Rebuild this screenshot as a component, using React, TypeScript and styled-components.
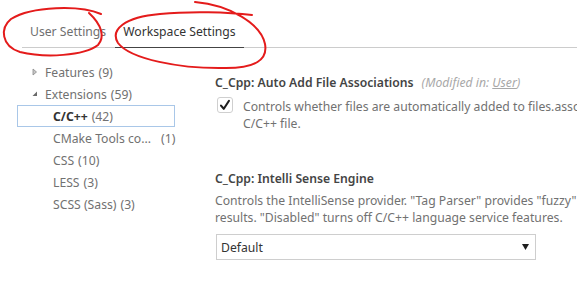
import styled, { createGlobalStyle } from "styled-components";

const GlobalStyle = createGlobalStyle`
  html, body {
    margin: 0;
    padding: 0;
    background: #ffffff;
  }
  body {
    font-family: "Noto Sans", "Open Sans", "DejaVu Sans", sans-serif;
    font-size: 12.2px;
  }
`;

const treeItems = [
  { label: "Features", count: "(9)", depth: 0, twisty: "closed" },
  { label: "Extensions", count: "(59)", depth: 0, twisty: "open" },
  { label: "C/C++", count: "(42)", depth: 1, selected: true },
  { label: "CMake Tools co...", count: " (1)", depth: 1, gap: true },
  { label: "CSS", count: "(10)", depth: 1 },
  { label: "LESS", count: "(3)", depth: 1 },
  { label: "SCSS (Sass)", count: "(3)", depth: 1 },
];

function Twisty({ open }: { open: boolean }) {
  if (open) {
    return (
      <TwistyBox>
        <svg width="6" height="6" viewBox="0 0 6 6">
          <polygon points="5,0.5 5,5 0.5,5" fill="#6a6a6a" />
        </svg>
      </TwistyBox>
    );
  }
  return (
    <TwistyBox>
      <svg width="6" height="8" viewBox="0 0 6 8">
        <polygon points="1,1 4.5,4 1,7" fill="#c8c8c8" stroke="#8a8a8a" strokeWidth="0.8" />
      </svg>
    </TwistyBox>
  );
}

function App() {
  return (
    <>
      <GlobalStyle />
      <Page>
        <TabBar>
          <Tab>User Settings</Tab>
          <Tab active>Workspace Settings</Tab>
        </TabBar>
        <Body>
          <Tree>
            {treeItems.map((item, idx) => (
              <TreeRow key={idx} depth={item.depth} selected={item.selected}>
                {item.twisty && <Twisty open={item.twisty === "open"} />}
                <TreeLabel selected={item.selected}>{item.label}</TreeLabel>
                <TreeCount wide={item.gap}>{item.count}</TreeCount>
              </TreeRow>
            ))}
          </Tree>
          <Settings>
            <Setting>
              <SettingTitle>
                C_Cpp: Auto Add File Associations
                <Modified>
                  (Modified in: <u>User</u>)
                </Modified>
              </SettingTitle>
              <CheckRow>
                <CheckBox>
                  <svg width="14" height="14" viewBox="0 0 14 14">
                    <path
                      d="M3 7.6 L5.8 10.8 L11 2.8"
                      fill="none"
                      stroke="#1e1e1e"
                      strokeWidth="2.1"
                      strokeLinecap="round"
                      strokeLinejoin="round"
                    />
                  </svg>
                </CheckBox>
                <Description>
                  Controls whether files are automatically added to files.associations when they are
                  opened from a #include in a
                  <br />
                  C/C++ file.
                </Description>
              </CheckRow>
            </Setting>
            <Setting second>
              <SettingTitle>C_Cpp: Intelli Sense Engine</SettingTitle>
              <Description spaced>
                Controls the IntelliSense provider. "Tag Parser" provides "fuzzy"
                <br />
                results. "Disabled" turns off C/C++ language service features.
              </Description>
              <Select>
                <span>Default</span>
                <Arrow>
                  <svg width="7" height="6" viewBox="0 0 7 6">
                    <polygon points="0,0 7,0 3.5,6" fill="#1e1e1e" />
                  </svg>
                </Arrow>
              </Select>
            </Setting>
          </Settings>
        </Body>
        <Scribbles width="577" height="283" viewBox="0 0 577 283">
          <path
            d="M101 14 C 80 5, 32 6, 11 19 C 0 28, 1 46, 20 52 C 45 58, 84 56, 98 45 C 105 37, 102 25, 89 13"
            fill="none"
            stroke="#e41b1b"
            strokeWidth="2"
            strokeLinecap="round"
          />
          <path
            d="M195 2 C 230 5, 261 24, 265 44 C 268 60, 255 68, 226 68 C 180 69, 130 59, 118 43 C 110 30, 124 17, 160 14 C 190 11, 228 12, 252 15"
            fill="none"
            stroke="#e41b1b"
            strokeWidth="2"
            strokeLinecap="round"
          />
        </Scribbles>
      </Page>
    </>
  );
}
export default App;

const Page = styled.div`
  position: relative;
  width: 577px;
  height: 283px;
  overflow: hidden;
  background: #ffffff;
`;

const TabBar = styled.div`
  display: flex;
  align-items: flex-end;
  gap: 1px;
  height: 47px;
  margin-left: 22px;
  border-bottom: 1px solid #cccccc;
`;

const Tab = styled.div<{ active?: boolean }>`
  padding: 0 8px 6px;
  line-height: 18px;
  color: ${(props) => (props.active ? "#333333" : "#6f6f6f")};
  margin-bottom: -1px;
  border-bottom: 1px solid ${(props) => (props.active ? "#444444" : "transparent")};
  white-space: nowrap;
`;

const Body = styled.div`
  display: flex;
  padding-top: 13px;
`;

const Tree = styled.div`
  width: 158px;
  margin-left: 17px;
  flex-shrink: 0;
  display: flex;
  flex-direction: column;
`;

const TreeRow = styled.div<{ depth: number; selected?: boolean }>`
  display: flex;
  align-items: center;
  height: 22px;
  box-sizing: border-box;
  padding-left: ${(props) => (props.depth ? 35 : 14)}px;
  border: 1px solid ${(props) => (props.selected ? "#a9c7e8" : "transparent")};
  white-space: nowrap;
`;

const TwistyBox = styled.span`
  display: flex;
  width: 13px;
  align-items: center;
`;

const TreeLabel = styled.span<{ selected?: boolean }>`
  color: ${(props) => (props.selected ? "#333333" : "#717171")};
  font-weight: ${(props) => (props.selected ? 700 : 400)};
  margin-right: 4px;
`;

const TreeCount = styled.span<{ wide?: boolean }>`
  color: #717171;
  margin-left: ${(props) => (props.wide ? 6 : 0)}px;
`;

const Settings = styled.div`
  margin-left: 40px;
  padding-top: 13px;
  display: flex;
  flex-direction: column;
  white-space: nowrap;
`;

const Setting = styled.div<{ second?: boolean }>`
  display: flex;
  flex-direction: column;
  margin-top: ${(props) => (props.second ? 38 : 0)}px;
`;

const SettingTitle = styled.div`
  line-height: 18px;
  color: #444444;
  font-weight: 600;
`;

const Modified = styled.span`
  margin-left: 8px;
  font-weight: 400;
  font-style: italic;
  color: #a8a8a8;
`;

const CheckRow = styled.div`
  display: flex;
  align-items: flex-start;
  gap: 10px;
  margin-top: 4px;
  padding-left: 2px;
`;

const CheckBox = styled.div`
  width: 16px;
  height: 16px;
  margin-top: 1px;
  box-sizing: border-box;
  border: 1px solid #cfcfcf;
  border-radius: 3px;
  display: flex;
  align-items: center;
  justify-content: center;
  flex-shrink: 0;
`;

const Description = styled.div<{ spaced?: boolean }>`
  color: #717171;
  line-height: 17px;
  margin-top: ${(props) => (props.spaced ? 4 : 2)}px;
`;

const Select = styled.div`
  margin-top: 8px;
  margin-left: 1px;
  width: 320px;
  height: 26px;
  box-sizing: border-box;
  border: 1px solid #cecece;
  display: flex;
  align-items: center;
  justify-content: space-between;
  padding: 0 6px 0 4px;
  color: #333333;
`;

const Arrow = styled.span`
  display: flex;
  align-items: center;
`;

const Scribbles = styled.svg`
  position: absolute;
  top: 0;
  left: 0;
  pointer-events: none;
`;
